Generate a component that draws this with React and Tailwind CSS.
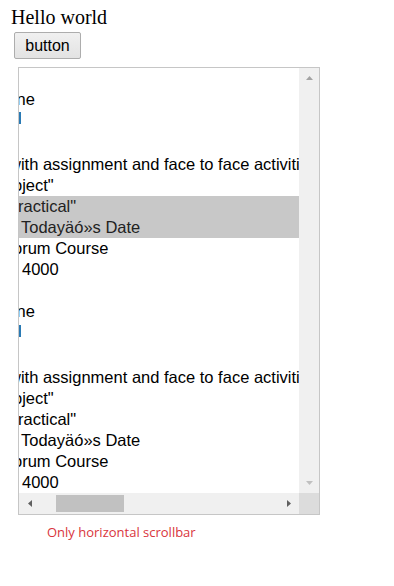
import React from "react";

function Line({ children, className = "" }) {
  return (
    <div className={"h-[21.1px] leading-[21.1px] whitespace-nowrap " + className}>
      {children}
    </div>
  );
}

function Record({ highlight }) {
  return (
    <>
      <Line>
        <span className="ml-[-2.5px] inline-block">ne</span>
      </Line>
      <Line>
        <div className="mt-[2px] h-[12px] w-[1.5px] bg-[#2a7ab4]" />
      </Line>
      <Line />
      <Line>
        <span className="ml-[-10px] inline-block">with assignment and face to face activities</span>
      </Line>
      <Line>
        <span className="ml-[-6px] inline-block">oject"</span>
      </Line>
      <div className={highlight ? "bg-[#c8c8c8] text-[#222]" : ""}>
        <Line>
          <span className="ml-[-1px] inline-block">ractical"</span>
        </Line>
        <Line>
          <span className="ml-[2px] inline-block">Todayäó»s Date</span>
        </Line>
      </div>
      <Line>
        <span className="ml-[-6px] inline-block">orum Course</span>
      </Line>
      <Line>
        <span className="ml-[3px] inline-block">4000</span>
      </Line>
      <Line />
    </>
  );
}

export default function App() {
  return (
    <div className="min-h-[586px] w-[394px] bg-white text-black">
      <div className="pl-[11px] pt-[6px] font-['Liberation_Serif',serif] text-[20px] leading-[23px]">
        Hello world
      </div>
      <div className="pl-[14px] pt-[3px]">
        <button className="flex h-[27px] w-[67px] items-center justify-center rounded-[2px] border border-[#adadad] bg-gradient-to-b from-[#f0f0f0] to-[#e3e3e3] font-['Liberation_Sans',Arial,sans-serif] text-[16px] leading-[18px] text-black">
          button
        </button>
      </div>
      <div className="ml-[18px] mt-[8px] flex h-[448px] w-[302px] flex-col border border-[#c6c6c6] font-['Liberation_Sans',Arial,sans-serif] text-[16.5px] text-black">
        <div className="flex min-h-0 flex-1">
          <div className="min-w-0 flex-1 overflow-hidden pt-[20.5px]">
            <Record highlight />
            <Record />
          </div>
          <div className="flex w-[20px] flex-col justify-between bg-[#f0f0f0]">
            <div className="flex h-[20px] items-center justify-center">
              <svg width="7" height="4" viewBox="0 0 7 4">
                <polygon points="0,4 7,4 3.5,0" fill="#a3a3a3" />
              </svg>
            </div>
            <div className="flex h-[20px] items-center justify-center">
              <svg width="7" height="4" viewBox="0 0 7 4">
                <polygon points="0,0 7,0 3.5,4" fill="#c0c0c0" />
              </svg>
            </div>
          </div>
        </div>
        <div className="flex h-[21px]">
          <div className="flex flex-1 items-center bg-[#f0f0f0]">
            <div className="flex h-full w-[21px] items-center justify-center">
              <svg width="4" height="7" viewBox="0 0 4 7">
                <polygon points="4,0 4,7 0,3.5" fill="#606060" />
              </svg>
            </div>
            <div className="ml-[16px] h-[17px] w-[68px] bg-[#c1c1c1]" />
            <div className="flex-1" />
            <div className="flex h-full w-[21px] items-center justify-center">
              <svg width="4" height="7" viewBox="0 0 4 7">
                <polygon points="0,0 0,7 4,3.5" fill="#606060" />
              </svg>
            </div>
          </div>
          <div className="w-[20px] bg-[#dcdcdc]" />
        </div>
      </div>
      <div className="ml-[47px] mt-[8px] font-['Open_Sans',sans-serif] text-[13px] leading-[18px] text-[#d9343c]">
        Only horizontal scrollbar
      </div>
    </div>
  );
}
